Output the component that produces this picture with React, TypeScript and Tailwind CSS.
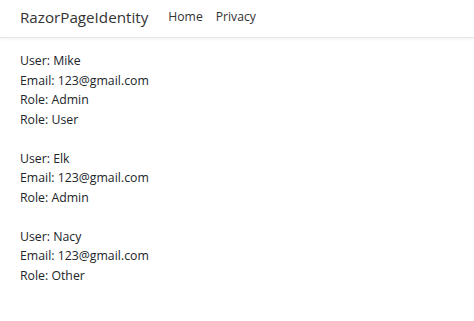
export default function App() {
  const users = [
    { name: "Mike", email: "123@gmail.com", roles: ["Admin", "User"] },
    { name: "Elk", email: "123@gmail.com", roles: ["Admin"] },
    { name: "Nacy", email: "123@gmail.com", roles: ["Other"] },
  ];

  return (
    <div
      className="min-h-[321px] bg-white text-[#212529]"
      style={{ fontFamily: '"Open Sans", "Noto Sans", sans-serif' }}
    >
      <nav className="flex h-[38px] items-center border-b border-[#e5e5e5] pb-[2px] pl-5 shadow-[0_1px_4px_rgba(0,0,0,0.06)]">
        <span className="mr-[20px] text-[15.2px] text-[#333]">RazorPageIdentity</span>
        <span className="mr-[13px] text-[12.2px] text-[#333]">Home</span>
        <span className="text-[12.2px] text-[#333]">Privacy</span>
      </nav>
      <main className="px-5 pt-[13px] text-[12.3px] leading-[19.5px]">
        {users.map((u) => (
          <div key={u.name} className="mb-[19.5px]">
            <div>User: {u.name}</div>
            <div>Email: {u.email}</div>
            {u.roles.map((r) => (
              <div key={r}>Role: {r}</div>
            ))}
          </div>
        ))}
      </main>
    </div>
  );
}
